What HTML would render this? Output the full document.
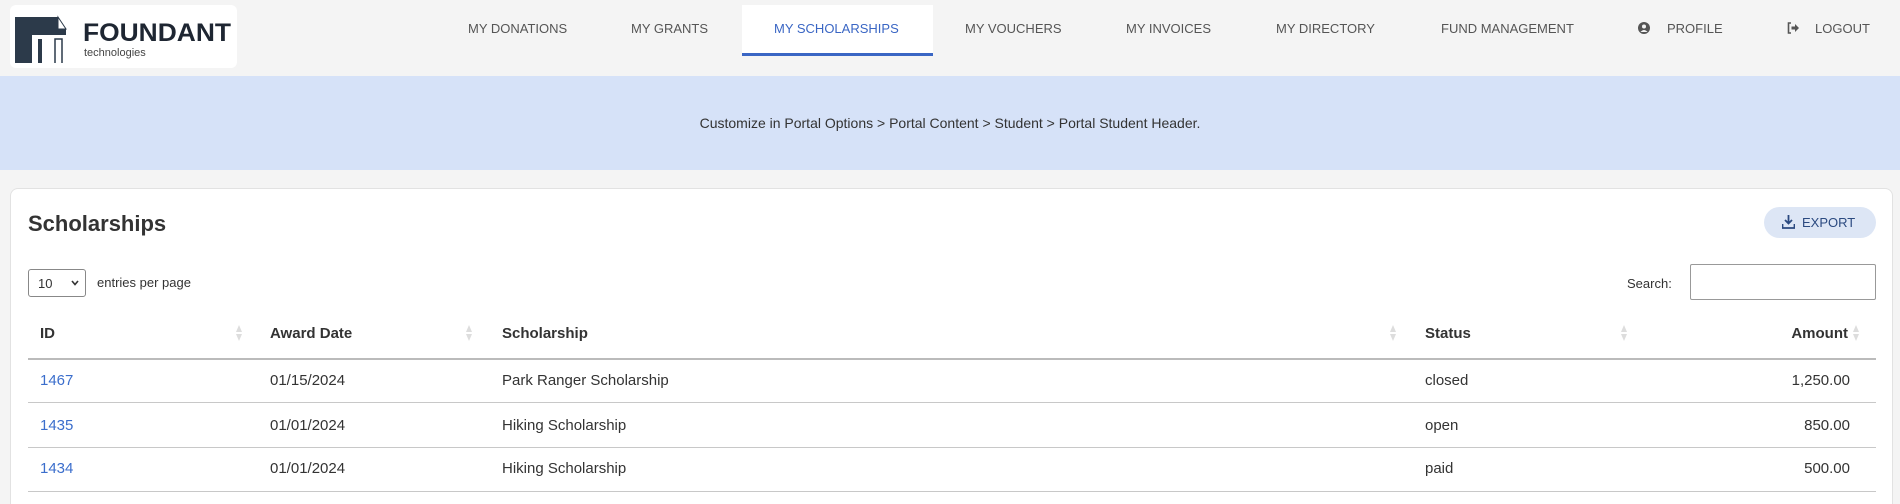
<!DOCTYPE html>
<html><head><meta charset="utf-8"><style>
*{box-sizing:border-box;margin:0;padding:0}
html{overflow:hidden;height:504px}
body{width:1900px;height:504px;background:#f4f4f4;font-family:"Liberation Sans",Arial,sans-serif;position:relative;overflow:hidden;color:#333}
.abs{position:absolute}
.logo{left:10px;top:5px;width:227px;height:63px;background:#fff;border-radius:6px}
.nav{top:21px;font-size:13px;color:#555;white-space:nowrap}
.tab{left:742px;top:5px;width:191px;height:51px;background:#fff;border-bottom:3px solid #3a66c4}
.banner{left:0;top:76px;width:1900px;height:94px;background:#d6e2f8;text-align:center;font-size:14px;line-height:94px;color:#333}
.card{left:10px;top:188px;width:1883px;height:316px;background:#fff;border:1px solid #e2e2e2;border-bottom:none;border-radius:8px 8px 0 0}
.th{font-weight:bold;font-size:15px;top:325px;color:#333}
.td{font-size:15px;color:#333}
.line{left:28px;width:1848px;height:1px;background:#c8c8c8}
.sort{width:8px;height:18px}
</style></head><body>
<div class="abs logo">
<svg width="227" height="63" viewBox="0 0 227 63">
<path d="M5 12 H48 L56 24 V30 H22 V58 H5 Z" fill="#2c3a4a"/>
<path d="M48 12 L56 24 H48 Z" fill="#fff" stroke="#2c3a4a" stroke-width="1"/>
<rect x="28" y="34" width="4" height="24" fill="#2c3a4a"/>
<path d="M45 58 V34 H52 V58" fill="none" stroke="#2c3a4a" stroke-width="1.5"/>
<text x="73" y="36" font-family="Liberation Sans,Arial,sans-serif" font-weight="bold" font-size="25" fill="#1e2632" textLength="148" lengthAdjust="spacingAndGlyphs">FOUNDANT</text>
<text x="74" y="51" font-family="Liberation Sans,Arial,sans-serif" font-size="11" fill="#444">technologies</text>
</svg></div>
<div class="abs tab"></div>
<div class="abs nav" style="left:468px">MY DONATIONS</div>
<div class="abs nav" style="left:631px">MY GRANTS</div>
<div class="abs nav" style="left:774px;color:#3a66c4">MY SCHOLARSHIPS</div>
<div class="abs nav" style="left:965px">MY VOUCHERS</div>
<div class="abs nav" style="left:1126px">MY INVOICES</div>
<div class="abs nav" style="left:1276px">MY DIRECTORY</div>
<div class="abs nav" style="left:1441px">FUND MANAGEMENT</div>
<svg class="abs" style="left:1638px;top:22px" width="12" height="12" viewBox="0 0 12 12"><circle cx="6" cy="6" r="6" fill="#555"/><circle cx="6" cy="4.5" r="2" fill="#f4f4f4"/><path d="M2.5 10 Q6 6 9.5 10" fill="#f4f4f4"/></svg>
<div class="abs nav" style="left:1667px">PROFILE</div>
<svg class="abs" style="left:1787px;top:22px" width="13" height="12" viewBox="0 0 13 12"><path d="M4 1 H1.5 V11 H4" fill="none" stroke="#555" stroke-width="1.6"/><path d="M4.5 4.5 H8 V2 L12 6 L8 10 V7.5 H4.5 Z" fill="#555"/></svg>
<div class="abs nav" style="left:1815px">LOGOUT</div>
<div class="abs banner">Customize in Portal Options &gt; Portal Content &gt; Student &gt; Portal Student Header.</div>
<div class="abs card"></div>
<div class="abs" style="left:28px;top:211px;font-size:22px;font-weight:bold;color:#333">Scholarships</div>
<div class="abs" style="left:1764px;top:207px;width:112px;height:31px;background:#dde6f5;border-radius:16px"></div>
<svg class="abs" style="left:1782px;top:215px" width="13" height="14" viewBox="0 0 13 14"><path d="M6.5 0 V8 M3 5 L6.5 8.5 L10 5" fill="none" stroke="#2b4a80" stroke-width="1.8"/><path d="M0.5 9 V13 H12.5 V9" fill="none" stroke="#2b4a80" stroke-width="1.8"/></svg>
<div class="abs" style="left:1802px;top:215px;font-size:13px;color:#2b4a80">EXPORT</div>
<div class="abs" style="left:28px;top:269px;width:58px;height:28px;border:1px solid #888;border-radius:3px;font-size:13px;padding:6px 0 0 9px">10</div>
<svg class="abs" style="left:71px;top:280px" width="8" height="6" viewBox="0 0 8 6"><path d="M1 1 L4 4.5 L7 1" fill="none" stroke="#333" stroke-width="1.6"/></svg>
<div class="abs" style="left:97px;top:275px;font-size:13px">entries per page</div>
<div class="abs" style="left:1627px;top:276px;font-size:13px">Search:</div>
<div class="abs" style="left:1690px;top:264px;width:186px;height:36px;border:1px solid #999;border-radius:2px"></div>
<div class="abs th" style="left:40px">ID</div>
<div class="abs th" style="left:270px">Award Date</div>
<div class="abs th" style="left:502px">Scholarship</div>
<div class="abs th" style="left:1425px">Status</div>
<div class="abs th" style="right:52px">Amount</div>
<svg class="abs sort" style="left:235px;top:324px" viewBox="0 0 8 18"><path d="M4 1 L7 8 H1 Z M4 17 L7 10 H1 Z" fill="#ddd"/></svg>
<svg class="abs sort" style="left:465px;top:324px" viewBox="0 0 8 18"><path d="M4 1 L7 8 H1 Z M4 17 L7 10 H1 Z" fill="#ddd"/></svg>
<svg class="abs sort" style="left:1389px;top:324px" viewBox="0 0 8 18"><path d="M4 1 L7 8 H1 Z M4 17 L7 10 H1 Z" fill="#ddd"/></svg>
<svg class="abs sort" style="left:1620px;top:324px" viewBox="0 0 8 18"><path d="M4 1 L7 8 H1 Z M4 17 L7 10 H1 Z" fill="#ddd"/></svg>
<svg class="abs sort" style="left:1852px;top:324px" viewBox="0 0 8 18"><path d="M4 1 L7 8 H1 Z M4 17 L7 10 H1 Z" fill="#ddd"/></svg>
<div class="abs line" style="top:358px;height:2px;background:#bbb"></div>
<div class="abs td" style="left:40px;top:372px;color:#3b6ecc">1467</div>
<div class="abs td" style="left:270px;top:372px">01/15/2024</div>
<div class="abs td" style="left:502px;top:372px">Park Ranger Scholarship</div>
<div class="abs td" style="left:1425px;top:372px">closed</div>
<div class="abs td" style="right:50px;top:372px">1,250.00</div>
<div class="abs line" style="top:402px"></div>
<div class="abs td" style="left:40px;top:417px;color:#3b6ecc">1435</div>
<div class="abs td" style="left:270px;top:417px">01/01/2024</div>
<div class="abs td" style="left:502px;top:417px">Hiking Scholarship</div>
<div class="abs td" style="left:1425px;top:417px">open</div>
<div class="abs td" style="right:50px;top:417px">850.00</div>
<div class="abs line" style="top:447px"></div>
<div class="abs td" style="left:40px;top:460px;color:#3b6ecc">1434</div>
<div class="abs td" style="left:270px;top:460px">01/01/2024</div>
<div class="abs td" style="left:502px;top:460px">Hiking Scholarship</div>
<div class="abs td" style="left:1425px;top:460px">paid</div>
<div class="abs td" style="right:50px;top:460px">500.00</div>
<div class="abs line" style="top:491px"></div>
</body></html>
